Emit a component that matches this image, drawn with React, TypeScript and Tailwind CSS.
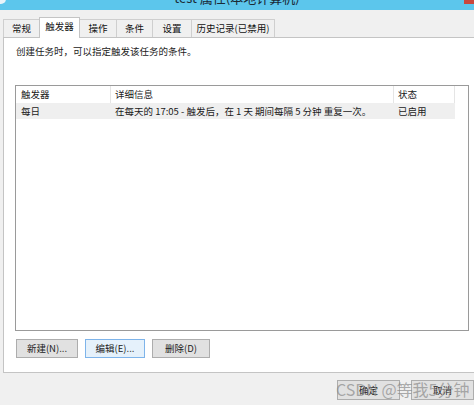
const tabs = ["常规", "触发器", "操作", "条件", "设置", "历史记录(已禁用)"];
const tabWidths = ["w-[37px]", "w-[41px]", "w-[38px]", "w-[37px]", "w-[40px]", "w-[84px]"];

function TabStrip({ active }: { active: number }) {
  return (
    <div className="flex items-end h-[27px] pl-[3px]">
      {tabs.map((t, i) => {
        const on = i === active;
        return (
          <div
            key={t}
            className={
              "-ml-px first:ml-0 flex items-center justify-center whitespace-nowrap border border-b-0 text-[9.5px] text-[#111] " +
              tabWidths[i] +
              (on
                ? " h-[21px] bg-white border-[#c4c4c4] relative z-10 -mb-px pb-[3px]"
                : " h-[18px] bg-[#f0f0f0] border-[#cfcfcf]")
            }
          >
            {t}
          </div>
        );
      })}
    </div>
  );
}

function Btn({ label, focus }: { label: string; focus?: boolean }) {
  return (
    <div
      className={
        "h-[19px] flex items-center justify-center border text-[9.5px] text-[#222] " +
        (focus ? "bg-[#e5f1fb] border-[#7eb4ea]" : "bg-[#e1e1e1] border-[#adadad]")
      }
    >
      {label}
    </div>
  );
}

export default function App() {
  return (
    <div
      className="relative w-[474px] h-[405px] overflow-hidden bg-[#f0f0f0]"
      style={{ fontFamily: '"Noto Sans CJK SC", "Liberation Sans", sans-serif' }}
    >
      {/* title bar, mostly scrolled off the top */}
      <div className="relative h-[10px] bg-[#5cc6ec] overflow-hidden">
        <div className="absolute left-[-4px] top-[-6px] w-[10px] h-[10px] rounded-full bg-[#e8f4fa]" />
        <div className="absolute inset-x-0 top-[-10px] text-center text-[13px] leading-[16px] text-[#1a2a36]">
          test 属性(本地计算机)
        </div>
        <div className="absolute right-0 top-0 w-[10px] h-[4px] bg-[#c9473d]" />
      </div>

      <TabStrip active={1} />

      {/* tab page */}
      <div className="ml-[3px] w-[480px] h-[336px] bg-white border border-[#c4c4c4]">
        <div className="pl-[12px] pt-[6px] text-[9.5px] leading-[14px] text-[#222]">
          创建任务时，可以指定触发该任务的条件。
        </div>

        <div className="ml-[11px] mt-[27px] w-[454px] h-[246px] border border-[#9a9a9a] text-[9.5px] text-[#1a1a1a]">
          <div className="flex h-[17px] items-center">
            <div className="w-[95px] h-full pl-[5px] flex items-center border-r border-[#e5e5e5]">触发器</div>
            <div className="w-[283px] h-full pl-[4px] flex items-center border-r border-[#e5e5e5]">详细信息</div>
            <div className="w-[61px] h-full pl-[4px] flex items-center border-r border-[#e5e5e5]">状态</div>
            <div className="flex-1" />
          </div>
          <div className="flex h-[16px] items-center">
            <div className="flex w-[439px] h-full items-center bg-[#efefef]">
              <div className="w-[95px] pl-[5px]">每日</div>
              <div className="w-[283px] pl-[4px] whitespace-nowrap">
                在每天的 17:05 - 触发后，在 1 天 期间每隔 5 分钟 重复一次。
              </div>
              <div className="w-[61px] pl-[4px]">已启用</div>
            </div>
          </div>
        </div>

        <div className="flex gap-[7px] ml-[12px] mt-[8px]">
          <div className="w-[62px]">
            <Btn label="新建(N)..." />
          </div>
          <div className="w-[60px]">
            <Btn label="编辑(E)..." focus />
          </div>
          <div className="w-[58px]">
            <Btn label="删除(D)" />
          </div>
        </div>
      </div>

      {/* dialog buttons */}
      <div className="flex gap-[11px] pl-[337px] pt-[7px]">
        <div className="w-[67px] h-[20px] flex items-center justify-center border border-[#adadad] bg-[#e1e1e1] text-[9.5px] text-[#222]">
          确定
        </div>
        <div className="w-[67px] h-[20px] flex items-center justify-center border border-[#adadad] bg-[#e1e1e1] text-[9.5px] text-[#222]">
          取消
        </div>
      </div>

      {/* watermark */}
      <div className="absolute left-[336px] top-[378px] text-[16px] leading-[22px] text-[#8a8a8a]/70 whitespace-nowrap">
        CSDN @等我5分钟
      </div>
    </div>
  );
}
